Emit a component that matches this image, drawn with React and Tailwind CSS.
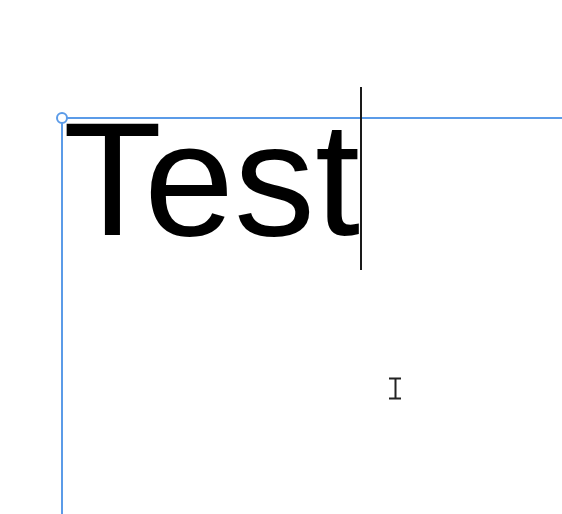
const App = () => {
  return (
    <div className="relative w-[562px] h-[514px] overflow-hidden bg-white">
      {/* text frame */}
      <div className="pt-[98px] pl-[63px]">
        <span
          className="block text-[162px] leading-none text-black"
          style={{ fontFamily: '"Liberation Sans", Arial, sans-serif' }}
        >
          Test
        </span>
      </div>

      {/* selection guides */}
      <div className="absolute left-[61px] top-[117px] right-0 h-[2px] bg-[#5b9be8]" />
      <div className="absolute left-[61px] top-[117px] bottom-0 w-[2px] bg-[#5b9be8]" />
      <div className="absolute left-[56px] top-[112px] w-[12px] h-[12px] rounded-full border-2 border-[#5b9be8] bg-white" />

      {/* text caret */}
      <div className="absolute left-[360px] top-[87px] w-[2px] h-[183px] bg-[#1a1a1a]" />

      {/* I-beam pointer */}
      <svg
        className="absolute left-[386px] top-[375px]"
        width="20"
        height="26"
        viewBox="0 0 20 26"
      >
        <path d="M3 3.5h12M3 23.5h12M9.5 3.5v20" stroke="#222" strokeWidth="2" fill="none" />
      </svg>
    </div>
  );
};

export default App;
